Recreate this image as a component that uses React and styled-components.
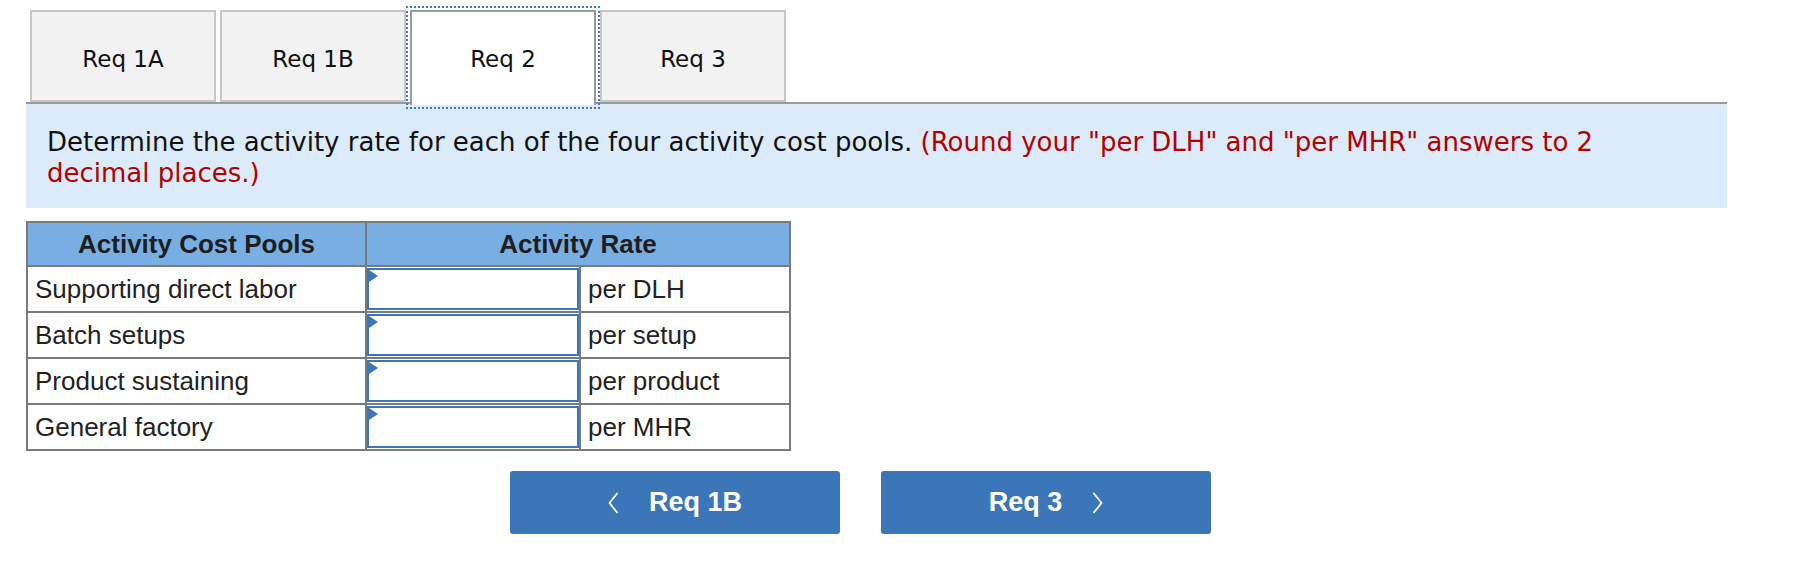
import React from "react";
import styled, { createGlobalStyle } from "styled-components";

const Global = createGlobalStyle`
  html, body { margin: 0; padding: 0; background: #fff; }
  body { font-family: "Liberation Sans", Arial, sans-serif; }
`;

const Page = styled.div`
  width: 1798px;
  height: 574px;
  padding: 10px 0 0 26px;
  box-sizing: border-box;
`;

const TabRow = styled.div`
  display: flex;
  align-items: flex-start;
  gap: 4px;
  padding-left: 4px;
  height: 92px;
  position: relative;
  z-index: 1;
`;

const Tab = styled.div`
  box-sizing: border-box;
  width: 186px;
  height: ${(p) => (p.$active ? "95px" : "92px")};
  display: flex;
  align-items: center;
  justify-content: center;
  font-family: "DejaVu Sans", Verdana, sans-serif;
  font-size: 23px;
  color: #111;
  background: ${(p) => (p.$active ? "#fff" : "#f2f2f2")};
  border: 2px solid ${(p) => (p.$active ? "#999" : "#c6c6c6")};
  border-bottom: ${(p) => (p.$active ? "none" : "2px solid #c6c6c6")};
  outline: ${(p) => (p.$active ? "2px dotted #3a7bc4" : "none")};
  outline-offset: 2px;
  padding-top: 6px;
  padding-bottom: ${(p) => (p.$active ? "5px" : "0")};
`;

const Panel = styled.div`
  width: 1701px;
  box-sizing: border-box;
  background: #dcebf9;
  border-top: 2px solid #9a9a9a;
  padding: 23px 21px 19px;
`;

const Prompt = styled.p`
  margin: 0;
  max-width: 1585px;
  font-family: "DejaVu Sans", Verdana, sans-serif;
  font-size: 26px;
  line-height: 31px;
  color: #111;
`;

const Hint = styled.span`
  color: #b50000;
`;

const Table = styled.table`
  margin-top: 13px;
  border-collapse: collapse;
  width: 763px;
  font-family: "Liberation Sans", Arial, sans-serif;
  font-size: 26px;
  color: #222;
  table-layout: fixed;
`;

const Th = styled.th`
  background: #79aee3;
  border: 2px solid #7a7a7a;
  height: 42px;
  font-weight: bold;
  color: #1e1e1e;
  text-align: center;
  padding: 0;
`;

const Td = styled.td`
  border: 2px solid #7a7a7a;
  height: 44px;
  padding: ${(p) => (p.$input ? "0" : "0 0 0 7px")};
  text-align: left;
  vertical-align: middle;
  background: #fff;
  white-space: nowrap;
`;

const InputWrap = styled.div`
  position: relative;
  margin: 1px 0;
  height: 42px;
  box-sizing: border-box;
  border: 2px solid #3a76b8;
  background: #fff;
  &::before {
    content: "";
    position: absolute;
    left: 0;
    top: 0;
    border-top: 6px solid transparent;
    border-bottom: 6px solid transparent;
    border-left: 9px solid #3a76b8;
  }
`;

const Field = styled.input`
  width: 100%;
  height: 100%;
  border: none;
  outline: none;
  background: transparent;
  box-sizing: border-box;
  font-size: 22px;
`;

const ButtonRow = styled.div`
  display: flex;
  gap: 41px;
  margin-top: 20px;
  padding-left: 484px;
`;

const NavButton = styled.button`
  width: 330px;
  height: 63px;
  border: none;
  border-radius: 3px;
  background: #3b77b8;
  color: #fff;
  font-family: "Liberation Sans", Arial, sans-serif;
  font-weight: bold;
  font-size: 27px;
  display: flex;
  align-items: center;
  justify-content: center;
  gap: 30px;
  cursor: pointer;
  padding: 0;
`;

const Chevron = ({ dir }) => (
  <svg width="11" height="22" viewBox="0 0 11 22" fill="none">
    <path
      d={dir === "left" ? "M9.5 1 L1.5 11 L9.5 21" : "M1.5 1 L9.5 11 L1.5 21"}
      stroke="#fff"
      strokeWidth="1.8"
      strokeLinejoin="miter"
    />
  </svg>
);

const rows = [
  ["Supporting direct labor", "per DLH"],
  ["Batch setups", "per setup"],
  ["Product sustaining", "per product"],
  ["General factory", "per MHR"],
];

export default function App() {
  return (
    <Page>
      <Global />
      <TabRow>
        <Tab>Req 1A</Tab>
        <Tab>Req 1B</Tab>
        <Tab $active>Req 2</Tab>
        <Tab>Req 3</Tab>
      </TabRow>
      <Panel>
        <Prompt>
          Determine the activity rate for each of the four activity cost pools.{" "}
          <Hint>(Round your "per DLH" and "per MHR" answers to 2 decimal places.)</Hint>
        </Prompt>
      </Panel>
      <Table>
        <colgroup>
          <col style={{ width: "339px" }} />
          <col style={{ width: "214px" }} />
          <col style={{ width: "210px" }} />
        </colgroup>
        <thead>
          <tr>
            <Th>Activity Cost Pools</Th>
            <Th colSpan={2}>Activity Rate</Th>
          </tr>
        </thead>
        <tbody>
          {rows.map(([pool, unit]) => (
            <tr key={pool}>
              <Td>{pool}</Td>
              <Td $input>
                <InputWrap>
                  <Field type="text" aria-label={pool} />
                </InputWrap>
              </Td>
              <Td>{unit}</Td>
            </tr>
          ))}
        </tbody>
      </Table>
      <ButtonRow>
        <NavButton>
          <Chevron dir="left" />
          <span>Req 1B</span>
        </NavButton>
        <NavButton>
          <span>Req 3</span>
          <Chevron dir="right" />
        </NavButton>
      </ButtonRow>
    </Page>
  );
}
